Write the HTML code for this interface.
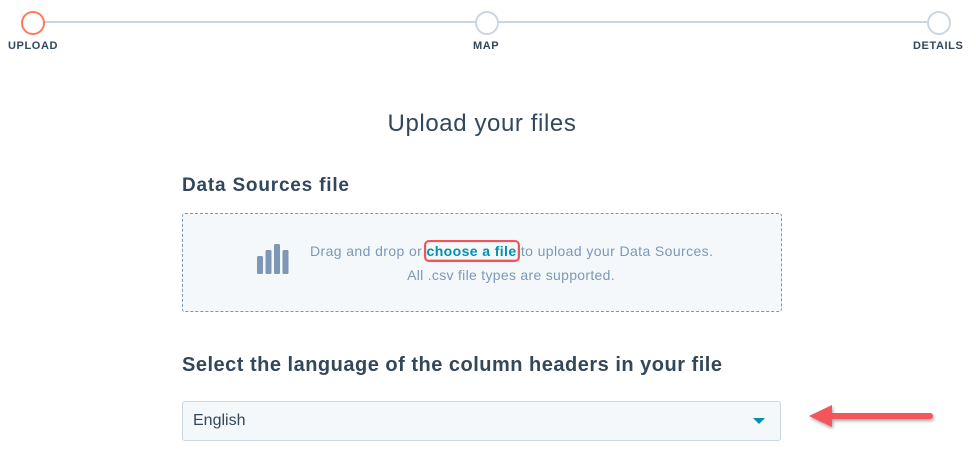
<!DOCTYPE html>
<html><head><meta charset="utf-8"><style>
body{margin:0;width:976px;height:470px;background:#fff;font-family:"Liberation Sans",sans-serif;position:relative;overflow:hidden;color:#33475b}
.a{position:absolute}
.circ{position:absolute;width:20px;height:20px;border-radius:50%;border:2px solid #cbd6e2;background:#fff;top:11px}
.lbl{position:absolute;top:40px;font-size:11px;font-weight:bold;letter-spacing:0.6px;color:#33475b}
</style></head><body>
<div class="a" style="left:40px;top:21px;width:900px;height:2px;background:#cbd6e2"></div>
<div class="circ" style="left:21px;border-color:#ff7a59"></div>
<div class="circ" style="left:475px"></div>
<div class="circ" style="left:927px"></div>
<div class="lbl" style="left:8px">UPLOAD</div>
<div class="lbl" style="left:473px">MAP</div>
<div class="lbl" style="left:913px">DETAILS</div>
<div class="a" style="left:0;width:964px;top:110px;text-align:center;font-size:24px;letter-spacing:0.6px;color:#33475b">Upload your files</div>
<div class="a" style="left:182px;top:175px;font-size:19px;font-weight:bold;letter-spacing:0.8px">Data Sources file</div>
<div class="a" style="left:182px;top:213px;width:598px;height:97px;border:1px dashed #7c98b6;border-radius:3px;background:#f5f8fa"></div>
<svg class="a" style="left:256px;top:242px" width="36" height="33" viewBox="0 0 36 33"><g fill="#7c98b6"><rect x="1" y="14" width="6" height="18" rx="1.5"/><rect x="9.5" y="8" width="6" height="24" rx="1.5"/><rect x="18" y="2" width="6" height="30" rx="1.5"/><rect x="26.5" y="8" width="6" height="24" rx="1.5"/></g></svg>
<div class="a" style="left:310px;top:243px;font-size:14px;letter-spacing:0.4px;color:#7c98b6;white-space:nowrap">Drag and drop or <span style="color:#0091ae;font-weight:bold;outline:2.5px solid #f2545b;outline-offset:1px;border-radius:2px;box-shadow:0 1px 4px rgba(0,0,0,.3)">choose a file</span> to upload your Data Sources.</div>
<div class="a" style="left:0;width:1022px;text-align:center;top:267px;font-size:14px;letter-spacing:0.3px;color:#7c98b6">All .csv file types are supported.</div>
<div class="a" style="left:182px;top:354px;font-size:20px;font-weight:bold;letter-spacing:0.5px">Select the language of the column headers in your file</div>
<div class="a" style="left:182px;top:401px;width:597px;height:38px;border:1px solid #cbd6e2;border-radius:3px;background:#f5f8fa"></div>
<div class="a" style="left:193px;top:412px;font-size:16px">English</div>
<div class="a" style="left:753px;top:418px;width:0;height:0;border-left:6px solid transparent;border-right:6px solid transparent;border-top:6px solid #0091ae"></div>
<svg class="a" style="left:805px;top:402px" width="135" height="32" viewBox="0 0 135 32"><defs><filter id="s"><feDropShadow dx="1" dy="2" stdDeviation="1.5" flood-opacity=".35"/></filter></defs><g filter="url(#s)" fill="#f2545b"><rect x="20" y="11" width="108" height="6" rx="3"/><polygon points="4,14 27,3 27,25"/></g></svg>
</body></html>
